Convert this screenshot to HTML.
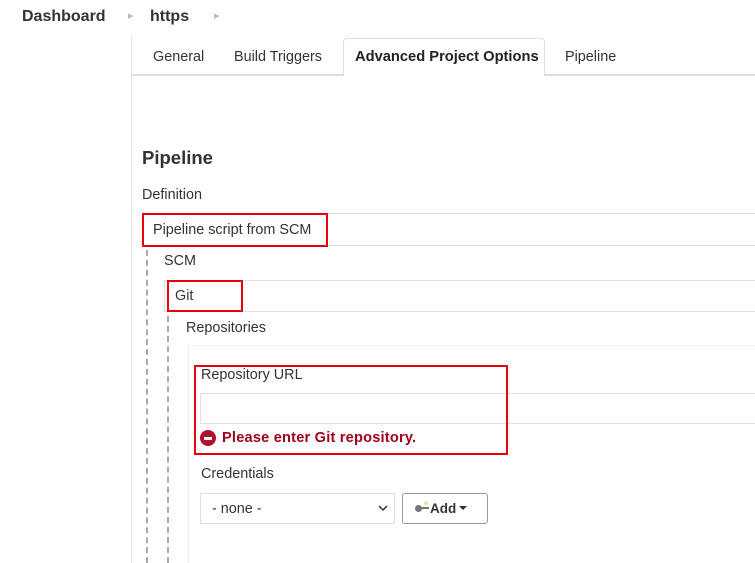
<!DOCTYPE html>
<html><head><style>
body{margin:0;width:755px;height:563px;background:#fff;position:relative;overflow:hidden;font-family:"Liberation Sans",sans-serif;color:#333}
.a{position:absolute;white-space:nowrap}
.t{font-size:14.4px;color:#333}
.box{position:absolute;border:1px solid #e0e0e0;background:#fff}
.red{position:absolute;border:2px solid #e8000b}
.dash{position:absolute;width:0;border-left:2px dashed #aaa}
</style></head><body>
<div class="a" style="left:22px;top:8px;font-size:16px;font-weight:bold;color:#333">Dashboard</div>
<div class="a" style="left:128px;top:9px;font-size:11px;color:#bbb">▸</div>
<div class="a" style="left:150px;top:8px;font-size:16px;font-weight:bold;color:#333">https</div>
<div class="a" style="left:214px;top:9px;font-size:11px;color:#bbb">▸</div>
<div class="a" style="left:131px;top:36px;width:1px;height:527px;background:#e4e4e4"></div>
<div class="a" style="left:131px;top:74px;width:624px;height:2px;background:#ddd"></div>
<div class="a" style="left:343px;top:38px;width:200px;height:37px;border:1px solid #ddd;border-bottom:none;border-radius:4px 4px 0 0;background:#fff"></div>
<div class="a t" style="left:153px;top:49px">General</div>
<div class="a t" style="left:234px;top:49px">Build Triggers</div>
<div class="a t" style="left:355px;top:49px;font-weight:bold;color:#222;font-size:14.7px">Advanced Project Options</div>
<div class="a t" style="left:565px;top:49px">Pipeline</div>
<div class="a" style="left:142px;top:147px;font-size:18.5px;font-weight:bold;color:#333">Pipeline</div>
<div class="a t" style="left:142px;top:187px">Definition</div>
<div class="box" style="left:142px;top:213px;width:620px;height:31px"></div>
<div class="red" style="left:142px;top:213px;width:182px;height:30px"></div>
<div class="a t" style="left:153px;top:222px">Pipeline script from SCM</div>
<div class="dash" style="left:146px;top:250px;height:313px"></div>
<div class="a t" style="left:164px;top:253px">SCM</div>
<div class="box" style="left:164px;top:280px;width:600px;height:30px"></div>
<div class="red" style="left:167px;top:280px;width:72px;height:28px"></div>
<div class="a t" style="left:175px;top:288px">Git</div>
<div class="dash" style="left:167px;top:316px;height:247px"></div>
<div class="a t" style="left:186px;top:320px">Repositories</div>
<div class="a" style="left:188px;top:345px;width:1px;height:218px;background:#eee"></div>
<div class="a" style="left:188px;top:345px;width:567px;height:1px;background:#f2f2f2"></div>
<div class="a t" style="left:201px;top:367px">Repository URL</div>
<div class="box" style="left:200px;top:393px;width:560px;height:29px"></div>
<div class="red" style="left:194px;top:365px;width:310px;height:86px"></div>
<div class="a" style="left:200px;top:430px;width:16px;height:16px;border-radius:50%;background:#b0102a"></div>
<div class="a" style="left:204px;top:437px;width:8px;height:3px;background:#fff"></div>
<div class="a" style="left:222px;top:430px;font-size:14.6px;font-weight:bold;color:#a0001c;letter-spacing:0.2px">Please enter Git repository.</div>
<div class="a t" style="left:201px;top:466px">Credentials</div>
<div class="box" style="left:200px;top:493px;width:193px;height:29px"></div>
<div class="a t" style="left:212px;top:501px">- none -</div>
<svg class="a" style="left:378px;top:504px" width="10" height="8"><path d="M1 2l4 4 4-4" stroke="#333" stroke-width="1.5" fill="none"/></svg>
<div class="a" style="left:402px;top:493px;width:84px;height:29px;border:1px solid #999;border-radius:3px;background:#fff"></div>
<div class="a" style="left:415px;top:505px;width:7px;height:7px;border-radius:50%;background:#777"></div>
<div class="a" style="left:421px;top:507px;width:8px;height:2px;background:#777"></div>
<div class="a" style="left:424px;top:501px;width:4px;height:4px;border-radius:50%;background:#f0e68c"></div>
<div class="a" style="left:430px;top:501px;font-size:13.5px;font-weight:bold;color:#333">Add</div>
<div class="a" style="left:459px;top:506px;width:0;height:0;border-left:4px solid transparent;border-right:4px solid transparent;border-top:4px solid #333"></div>
</body></html>
